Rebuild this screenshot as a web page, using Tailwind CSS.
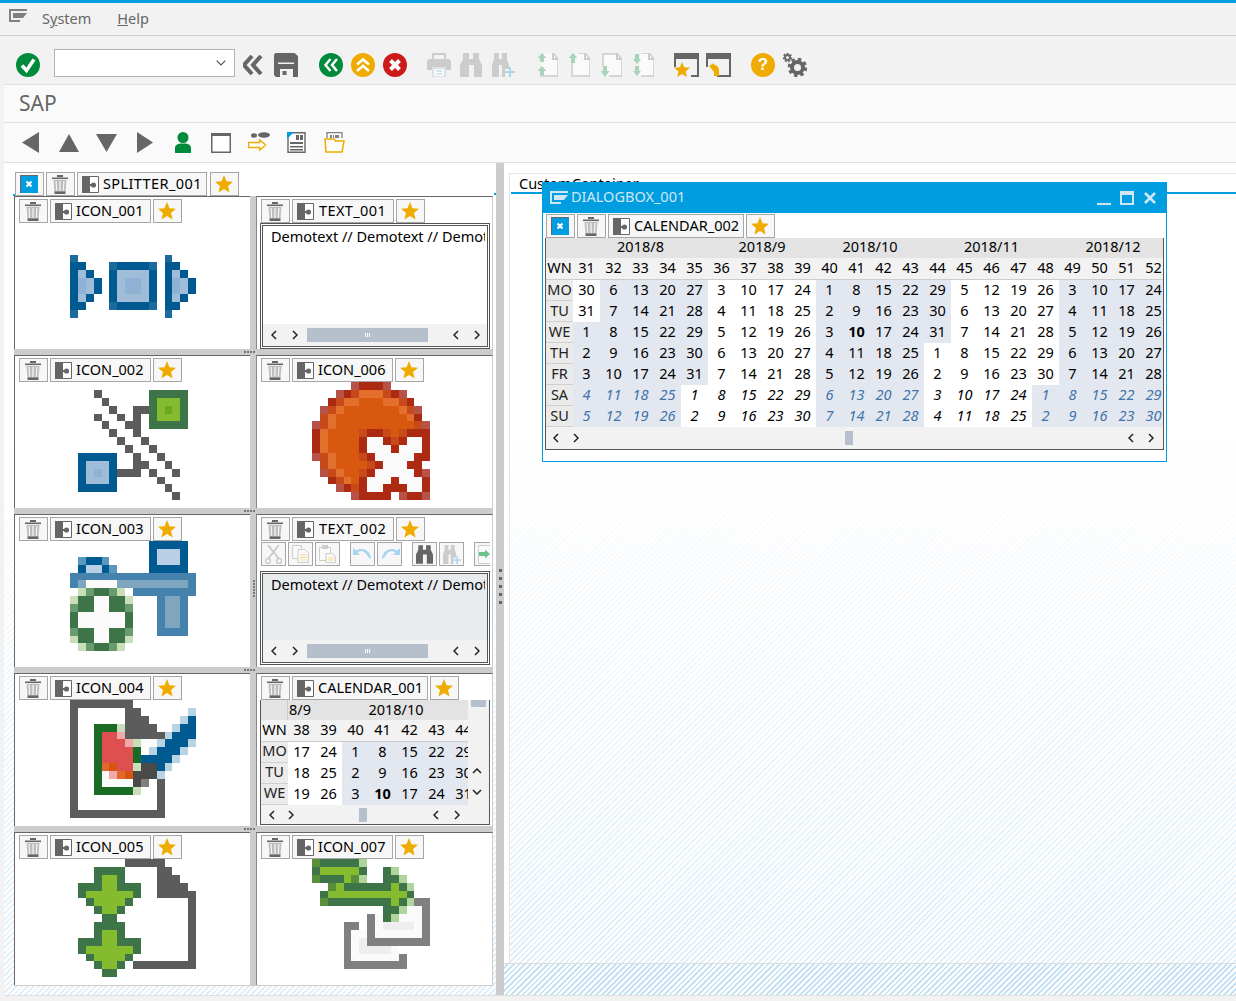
<!DOCTYPE html>
<html lang="en">

<head>
    <meta charset="UTF-8">
    <title>SAP</title>
    <script src="https://cdn.jsdelivr.net/npm/@tailwindcss/browser@4"></script>
</head>

<body class="relative w-[1236px] h-[1001px] overflow-hidden bg-[#f2f2f2] font-['Noto_Sans',sans-serif] text-[14.5px] leading-[22px] text-black">

    <!-- shared icons -->
    <svg class="hidden">
        <symbol id="trash" viewBox="0 0 16 19">
            <path d="M5 0h6v2H5z" fill="#666" />
            <path d="M0 2.5h16v1.6H0z" fill="#666" />
            <path d="M1.5 5h13l-1.2 14H2.700z" fill="#bdbdbd" />
            <path d="M3.500 6h1.200l.5 10H4.200zM7.400 6h1.200v10H7.400zM11.300 6h1.200l-.7 10h-1z" fill="#f7f7f7" />
            <path d="M2.500 16.500h11l-.2 2.500H2.700z" fill="#666" />
        </symbol>
        <symbol id="door" viewBox="0 0 17 17">
            <path d="M0 0h8v17H0z" fill="#666" />
            <path d="M8 .5h8.500v16H8" fill="#fff" stroke="#666" />
            <circle cx="11.500" cy="9" r="2.600" fill="#666" />
            <path d="M8 8h2v2H8z" fill="#666" />
        </symbol>
        <symbol id="star" viewBox="0 0 18 18">
            <path d="M9 0l2.500 6.300 6.500.5-5 4.300 1.600 6.500L9 14.100l-5.600 3.500L5 11.100 0 6.800l6.500-.5z" fill="#f0ab00" />
        </symbol>
        <symbol id="bluex" viewBox="0 0 18 18">
            <path d="M0 0h18v18H0z" fill="#666" />
            <path d="M1 1h17v17H1z" fill="#009de0" />
            <path d="M6.500 6.500l5 5M11.500 6.500l-5 5" stroke="#fff" stroke-width="2.200" />
        </symbol>
        <symbol id="chl" viewBox="0 0 6 10">
            <path d="M5 1L1 5l4 4" fill="none" stroke="#222" stroke-width="1.500" />
        </symbol>
        <symbol id="chr" viewBox="0 0 6 10">
            <path d="M1 1l4 4-4 4" fill="none" stroke="#222" stroke-width="1.500" />
        </symbol>
        <symbol id="binoc" viewBox="0 0 22 24">
            <path d="M3 0h6v6h4V0h6v6l3 6v12h-8V12H9v12H0V12l3-6z" />
        </symbol>
        <symbol id="flag" viewBox="0 0 18 13">
            <path d="M0 0h18v2H2v9h9v2H0zM4 4h14l-4 5H4z" fill="currentColor" />
        </symbol>
    </svg>

    <div class="h-[3px] bg-[#009de0]"></div>

    <!-- menu bar -->
    <div class="flex items-center h-[33px] border-b border-[#cccccc] text-[#666666]">
        <svg class="ml-[9px] w-[18px] h-[13px] -mt-[8px] text-[#808080]"><use href="#flag" /></svg>
        <span class="ml-[15px] -mt-[3px]">S<span class="underline">y</span>stem</span>
        <span class="ml-[26px] -mt-[3px]"><span class="underline">H</span>elp</span>
    </div>

    <div class="ml-[4px]">
        <!-- system toolbar -->
        <div class="flex items-center h-[49px] pt-[10px] border-b border-[#e0e0e0]">
            <svg class="ml-[12px] w-[24px] h-[24px]" viewBox="0 0 24 24"><circle cx="12" cy="12" r="12" fill="#008a3c" /><path d="M6 12.500l4.500 5L18 6.500" fill="none" stroke="#fff" stroke-width="3.500" /></svg>
            <div class="ml-[14px] -mt-[4px] w-[181px] h-[28px] flex items-center justify-end pr-[8px] bg-white border border-[#b3b3b3]">
                <svg class="w-[10px] h-[6px]" viewBox="0 0 10 6"><path d="M.7.7L5 5 9.300.7" fill="none" stroke="#555" stroke-width="1.200" /></svg>
            </div>
            <svg class="ml-[8px] w-[20px] h-[20px]" viewBox="0 0 20 20"><path d="M9 1L1 10l8 9M18 1l-8 9 8 9" fill="none" stroke="#666" stroke-width="4" /></svg>
            <svg class="ml-[11px] w-[24px] h-[24px]" viewBox="0 0 24 24"><path d="M0 1.500L1.500 0h19L24 3v21H2l-2-2z" fill="#666" /><path d="M4 9.500h16v1.500H4z" fill="#f2f2f2" /><path d="M6 16h13v8H6z" fill="#f2f2f2" /><path d="M8.500 18h4v4h-4z" fill="#666" /></svg>
            <svg class="ml-[21px] w-[24px] h-[24px]" viewBox="0 0 24 24"><circle cx="12" cy="12" r="12" fill="#008a3c" /><path d="M11.500 6l-5 6 5 6M18 6l-5 6 5 6" fill="none" stroke="#fff" stroke-width="2.500" /></svg>
            <svg class="ml-[8px] w-[24px] h-[24px]" viewBox="0 0 24 24"><circle cx="12" cy="12" r="12" fill="#f0ab00" /><path d="M6 11.500l6-5 6 5M6 18l6-5 6 5" fill="none" stroke="#fff" stroke-width="2.500" /></svg>
            <svg class="ml-[8px] w-[24px] h-[24px]" viewBox="0 0 24 24"><circle cx="12" cy="12" r="12" fill="#cc1919" /><path d="M7.500 7.500l9 9M16.500 7.500l-9 9" stroke="#fff" stroke-width="4" /></svg>
            <svg class="ml-[20px] w-[24px] h-[24px]" viewBox="0 0 24 24"><path d="M5 0h14v6H5z" fill="#cccccc" /><path d="M7 2h10v4H7z" fill="#f2f2f2" /><path d="M2 6h20l2 2v9h-5v-3H5v3H0V8z" fill="#cccccc" /><path d="M6 15h12v9H6z" fill="#fafafa" stroke="#cccccc" /><path d="M9 18h6M9 21h6" stroke="#a8d8f0" /><path d="M18 8.500h5" stroke="#a8d8f0" /></svg>
            <svg class="ml-[9px] w-[22px] h-[24px] fill-[#cccccc]"><use href="#binoc" /></svg>
            <svg class="ml-[10px] w-[23px] h-[24px]" viewBox="0 0 23 24"><path d="M2 0h5v6h3V0h5v6l2 6v4h-4v8H10V12H7v12H0V12l2-6z" fill="#cccccc" /><path d="M18 14v10M13 19h10" stroke="#a8d8f0" stroke-width="2" /></svg>
            <svg class="ml-[22px] w-[21px] h-[24px]" viewBox="0 0 21 24"><path d="M7 .5h9l4.500 5V23H3" fill="#fafafa" /><path d="M3 23h18V6l-5-6" fill="none" stroke="#cccccc" stroke-width="1.500" /><path d="M15 0h2v5h4v2h-6z" fill="#cccccc" /><path d="M5 0l4.500 5H7v4H3V5H.5zM5 13l4.500 5H7v4H3v-4H.5z" fill="#a8d5ba" /></svg>
            <svg class="ml-[11px] w-[21px] h-[24px]" viewBox="0 0 21 24"><path d="M7 .5h9l4.500 5V23H3V8" fill="#fafafa" /><path d="M3 10v13h18V6l-5-6H9" fill="none" stroke="#cccccc" stroke-width="1.500" /><path d="M15 0h2v5h4v2h-6z" fill="#cccccc" /><path d="M4 0l4.500 5H6v5H2V5H-.5z" fill="#a8d5ba" /></svg>
            <svg class="ml-[11px] w-[21px] h-[24px]" viewBox="0 0 21 24"><path d="M2 .5h14l4.500 5V23H2" fill="#fafafa" /><path d="M2 13V1h14l5 5v17H8" fill="none" stroke="#cccccc" stroke-width="1.500" /><path d="M15 0h2v5h4v2h-6z" fill="#cccccc" /><path d="M4 24l-4.500-6H2v-5h4v5h2.500z" fill="#a8d5ba" /></svg>
            <svg class="ml-[11px] w-[21px] h-[24px]" viewBox="0 0 21 24"><path d="M7 .5h9l4.500 5V23H7" fill="#fafafa" /><path d="M8 23h13V6l-5-6H8" fill="none" stroke="#cccccc" stroke-width="1.500" /><path d="M15 0h2v5h4v2h-6z" fill="#cccccc" /><path d="M4 11L.000 6h2V1h4v5h2zM4 23l-4-5h2v-5h4v5h2z" fill="#a8d5ba" /></svg>
            <svg class="ml-[20px] w-[25px] h-[24px]" viewBox="0 0 25 24"><path d="M0 0h25v24h-8v-2h6V6H2v8H0z" fill="#666" /><path d="M8 9l2.200 5.300 5.800.4-4.400 3.700 1.400 5.600L8 21l-4.900 3 1.400-5.600L0 14.700l5.800-.4z" fill="#f0ab00" /></svg>
            <svg class="ml-[7px] w-[25px] h-[24px]" viewBox="0 0 25 24"><path d="M0 0h25v24H11v-2h12V6H2v8H0z" fill="#666" /><path d="M3 13l5-3v2c3 0 5 2 5 6v5H8v-5c0-1-.5-1.500-1-1.500H8V19z" fill="#f0ab00" /></svg>
            <div class="ml-[20px] w-[24px] h-[24px] rounded-full bg-[#f0ab00] flex items-center justify-center text-white font-bold text-[17px] font-['Liberation_Sans',sans-serif]">?</div>
            <svg class="ml-[8px] w-[24px] h-[24px]" viewBox="0 0 24 24"><circle cx="14.500" cy="14.500" r="5.500" fill="none" stroke="#666" stroke-width="4" /><circle cx="14.500" cy="14.500" r="8" fill="none" stroke="#666" stroke-width="3.500" stroke-dasharray="3.300 3" /><circle cx="4.500" cy="4.500" r="2.500" fill="none" stroke="#666" stroke-width="2" /><circle cx="4.500" cy="4.500" r="4" fill="none" stroke="#666" stroke-width="1.500" stroke-dasharray="2 1.500" /></svg>
        </div>

        <!-- title -->
        <div class="h-[38px] flex items-center pl-[15px] pb-[2px] bg-[#fafafa] border-b border-[#e0e0e0] text-[21px] text-[#666666]">SAP</div>

        <!-- application toolbar -->
        <div class="flex items-center h-[40px] bg-[#fafafa] border-b border-[#e0e0e0]">
            <svg class="ml-[18px] w-[17px] h-[21px]" viewBox="0 0 17 21"><path d="M17 0v21L0 10.500z" fill="#666" /></svg>
            <svg class="ml-[20px] w-[20px] h-[18px]" viewBox="0 0 20 18"><path d="M0 18L10 0l10 18z" fill="#666" /></svg>
            <svg class="ml-[17px] w-[21px] h-[18px]" viewBox="0 0 21 18"><path d="M0 0h21L10.500 18z" fill="#666" /></svg>
            <svg class="ml-[20px] w-[16px] h-[21px]" viewBox="0 0 16 21"><path d="M0 0v21l16-10.500z" fill="#666" /></svg>
            <svg class="ml-[22px] w-[16px] h-[21px]" viewBox="0 0 16 21"><circle cx="8" cy="5.500" r="5.500" fill="#008a3c" /><path d="M0 21v-5c0-3 3-4 5-4.500h6c2 .5 5 1.500 5 4.500v5z" fill="#008a3c" /></svg>
            <svg class="ml-[20px] w-[20px] h-[20px]" viewBox="0 0 20 20"><path d="M0 0h20v20H0z" fill="#666" /><path d="M1.500 3h17v15.500h-17z" fill="#fff" /></svg>
            <svg class="ml-[17px] w-[22px] h-[21px]" viewBox="0 0 22 21"><ellipse cx="6" cy="3.500" rx="3" ry="2.200" fill="#666" /><ellipse cx="16" cy="3" rx="6" ry="2.800" fill="#666" /><path d="M.7 10.500h11V8l6 5-6 5v-2.500H.7z" fill="#fff" stroke="#f0ab00" stroke-width="1.300" /></svg>
            <svg class="ml-[17px] w-[19px] h-[21px]" viewBox="0 0 19 21"><path d="M1 .7h17v19.600H1z" fill="#fff" stroke="#666" stroke-width="1.400" /><path d="M0 0h7L0 7z" fill="#009de0" /><path d="M9 3h3v5H9zM13 3h3v5h-3z" fill="#666" /><path d="M3 10h13v2H3zM3 14h13v1.500H3zM3 17h13v1.500H3z" fill="#666" /></svg>
            <svg class="ml-[18px] w-[21px] h-[21px]" viewBox="0 0 21 21"><path d="M3 6V.7h15V6" fill="none" stroke="#808080" stroke-width="1.300" /><path d="M6 3h2v3H6zM9 3h1v3H9zM11 3h4v3h-4z" fill="#808080" /><path d="M1 7h9l1.500 2H20l-2 11H2z" fill="#fff" stroke="#f0ab00" stroke-width="1.500" /></svg>
        </div>

        <!-- main -->
        <div class="flex h-[832px]">
            <!-- left pane with splitter -->
            <div class="relative w-[492px] pt-[9px] bg-white bg-[linear-gradient(to_bottom,#ffffff_30%,#ffffff00_100%),repeating-linear-gradient(135deg,#ffffff_0px,#ffffff_2px,#e3f0f9_2px,#e3f0f9_4px)]">
                <div class="absolute left-[9px] top-[31px] w-[2px] h-[2px] bg-[#009de0]"></div>
                <div class="absolute left-[490px] top-[30px] w-[2px] h-[2px] bg-[#009de0]"></div>
                <div class="flex gap-[2px] h-[24px] ml-[11px]">
                    <button class="w-[29px] flex items-center justify-center pr-[2px] border border-[#a6a6a6] bg-[#f7f7f7]"><svg class="w-[18px] h-[18px]"><use href="#bluex" /></svg></button>
                    <button class="w-[29px] flex items-center justify-center pr-[2px] border border-[#a6a6a6] bg-[#f7f7f7]"><svg class="w-[16px] h-[19px]"><use href="#trash" /></svg></button>
                    <button class="w-[130px] flex items-center pl-[4px] pb-[2px] border border-[#a6a6a6] bg-[#f7f7f7] tracking-[0.4px]"><svg class="w-[17px] h-[17px] mr-[4px] mt-[2px]"><use href="#door" /></svg>SPLITTER_001</button>
                    <button class="ml-[1px] w-[29px] flex items-center justify-center pr-[2px] border border-[#a6a6a6] bg-[#f7f7f7]"><svg class="w-[18px] h-[18px]"><use href="#star" /></svg></button>
                </div>

                <div class="flex ml-[10px] w-[479px] pb-px bg-[#cccccc]">
                    <!-- left column -->
                    <div class="w-[236px] flex flex-col gap-[6px]">
                        <div class="h-[153px] bg-white border-t border-l border-[#666666] pt-[2px] pl-[4px] overflow-hidden">
                            <div class="flex gap-[2px] h-[24px]">
                                <button class="w-[29px] flex items-center justify-center pr-[2px] border border-[#a6a6a6] bg-[#f7f7f7]"><svg class="w-[16px] h-[19px]"><use href="#trash" /></svg></button>
                                <button class="w-[101px] flex items-center pl-[4px] pb-[2px] border border-[#a6a6a6] bg-[#f7f7f7]"><svg class="w-[17px] h-[17px] mr-[4px] mt-[2px]"><use href="#door" /></svg>ICON_001</button>
                                <button class="w-[29px] flex items-center justify-center pr-[2px] border border-[#a6a6a6] bg-[#f7f7f7]"><svg class="w-[18px] h-[18px]"><use href="#star" /></svg></button>
                            </div>
                            <div data-px="i1" class="ml-[51px]"></div>
                        </div>
                        <div class="h-[153px] bg-white border-t border-l border-[#666666] pt-[2px] pl-[4px] overflow-hidden">
                            <div class="flex gap-[2px] h-[24px]">
                                <button class="w-[29px] flex items-center justify-center pr-[2px] border border-[#a6a6a6] bg-[#f7f7f7]"><svg class="w-[16px] h-[19px]"><use href="#trash" /></svg></button>
                                <button class="w-[101px] flex items-center pl-[4px] pb-[2px] border border-[#a6a6a6] bg-[#f7f7f7]"><svg class="w-[17px] h-[17px] mr-[4px] mt-[2px]"><use href="#door" /></svg>ICON_002</button>
                                <button class="w-[29px] flex items-center justify-center pr-[2px] border border-[#a6a6a6] bg-[#f7f7f7]"><svg class="w-[18px] h-[18px]"><use href="#star" /></svg></button>
                            </div>
                            <div data-px="i2" class="ml-[51px]"></div>
                        </div>
                        <div class="h-[153px] bg-white border-t border-l border-[#666666] pt-[2px] pl-[4px] overflow-hidden">
                            <div class="flex gap-[2px] h-[24px]">
                                <button class="w-[29px] flex items-center justify-center pr-[2px] border border-[#a6a6a6] bg-[#f7f7f7]"><svg class="w-[16px] h-[19px]"><use href="#trash" /></svg></button>
                                <button class="w-[101px] flex items-center pl-[4px] pb-[2px] border border-[#a6a6a6] bg-[#f7f7f7]"><svg class="w-[17px] h-[17px] mr-[4px] mt-[2px]"><use href="#door" /></svg>ICON_003</button>
                                <button class="w-[29px] flex items-center justify-center pr-[2px] border border-[#a6a6a6] bg-[#f7f7f7]"><svg class="w-[18px] h-[18px]"><use href="#star" /></svg></button>
                            </div>
                            <div data-px="i3" class="ml-[51px]"></div>
                        </div>
                        <div class="h-[153px] bg-white border-t border-l border-[#666666] pt-[2px] pl-[4px] overflow-hidden">
                            <div class="flex gap-[2px] h-[24px]">
                                <button class="w-[29px] flex items-center justify-center pr-[2px] border border-[#a6a6a6] bg-[#f7f7f7]"><svg class="w-[16px] h-[19px]"><use href="#trash" /></svg></button>
                                <button class="w-[101px] flex items-center pl-[4px] pb-[2px] border border-[#a6a6a6] bg-[#f7f7f7]"><svg class="w-[17px] h-[17px] mr-[4px] mt-[2px]"><use href="#door" /></svg>ICON_004</button>
                                <button class="w-[29px] flex items-center justify-center pr-[2px] border border-[#a6a6a6] bg-[#f7f7f7]"><svg class="w-[18px] h-[18px]"><use href="#star" /></svg></button>
                            </div>
                            <div data-px="i4" class="ml-[51px]"></div>
                        </div>
                        <div class="h-[153px] bg-white border-t border-l border-[#666666] pt-[2px] pl-[4px] overflow-hidden">
                            <div class="flex gap-[2px] h-[24px]">
                                <button class="w-[29px] flex items-center justify-center pr-[2px] border border-[#a6a6a6] bg-[#f7f7f7]"><svg class="w-[16px] h-[19px]"><use href="#trash" /></svg></button>
                                <button class="w-[101px] flex items-center pl-[4px] pb-[2px] border border-[#a6a6a6] bg-[#f7f7f7]"><svg class="w-[17px] h-[17px] mr-[4px] mt-[2px]"><use href="#door" /></svg>ICON_005</button>
                                <button class="w-[29px] flex items-center justify-center pr-[2px] border border-[#a6a6a6] bg-[#f7f7f7]"><svg class="w-[18px] h-[18px]"><use href="#star" /></svg></button>
                            </div>
                            <div data-px="i5" class="ml-[51px]"></div>
                        </div>
                    </div>

                    <div class="w-[6px]"></div>

                    <!-- right column -->
                    <div class="w-[237px] flex flex-col gap-[6px]">
                        <div class="h-[153px] bg-white border-t border-l border-r border-t-[#666666] border-l-[#888888] border-r-[#cccccc] pt-[2px] overflow-hidden">
                            <div class="flex gap-[2px] h-[24px] pl-[4px]">
                                <button class="w-[29px] flex items-center justify-center pr-[2px] border border-[#a6a6a6] bg-[#f7f7f7]"><svg class="w-[16px] h-[19px]"><use href="#trash" /></svg></button>
                                <button class="w-[102px] flex items-center pl-[4px] pb-[2px] border border-[#a6a6a6] bg-[#f7f7f7] tracking-[0.4px]"><svg class="w-[17px] h-[17px] mr-[5px] mt-[2px]"><use href="#door" /></svg>TEXT_001</button>
                                <button class="w-[29px] flex items-center justify-center pr-[2px] border border-[#a6a6a6] bg-[#f7f7f7]"><svg class="w-[18px] h-[18px]"><use href="#star" /></svg></button>
                            </div>
                            <div class="ml-[3px] w-[230px] h-[126px] border border-[#555555] p-px">
                                <div class="h-full border border-[#555555] flex flex-col">
                                    <div class="flex-1 ml-[8px] mr-[2px] -mt-px overflow-hidden whitespace-nowrap">Demotext // Demotext // Demotext</div>
                                    <div class="h-[22px] bg-[#f2f2f2] flex items-center">
                                        <span class="w-[21px] flex justify-center"><svg class="w-[6px] h-[10px]"><use href="#chl" /></svg></span>
                                        <span class="w-[21px] flex justify-center"><svg class="w-[6px] h-[10px]"><use href="#chr" /></svg></span>
                                        <span class="ml-[2px] w-[121px] h-[14px] bg-[#b5c0cc] flex items-center justify-center gap-px"><i class="w-px h-[4px] bg-white"></i><i class="w-px h-[4px] bg-white"></i><i class="w-px h-[4px] bg-white"></i></span>
                                        <span class="ml-[17px] w-[21px] flex justify-center"><svg class="w-[6px] h-[10px]"><use href="#chl" /></svg></span>
                                        <span class="w-[21px] flex justify-center"><svg class="w-[6px] h-[10px]"><use href="#chr" /></svg></span>
                                    </div>
                                </div>
                            </div>
                        </div>
                        <div class="h-[153px] bg-white border-t border-l border-r border-t-[#666666] border-l-[#888888] border-r-[#cccccc] pt-[2px] overflow-hidden">
                            <div class="flex gap-[2px] h-[24px] pl-[4px]">
                                <button class="w-[29px] flex items-center justify-center pr-[2px] border border-[#a6a6a6] bg-[#f7f7f7]"><svg class="w-[16px] h-[19px]"><use href="#trash" /></svg></button>
                                <button class="w-[101px] flex items-center pl-[4px] pb-[2px] border border-[#a6a6a6] bg-[#f7f7f7]"><svg class="w-[17px] h-[17px] mr-[4px] mt-[2px]"><use href="#door" /></svg>ICON_006</button>
                                <button class="w-[29px] flex items-center justify-center pr-[2px] border border-[#a6a6a6] bg-[#f7f7f7]"><svg class="w-[18px] h-[18px]"><use href="#star" /></svg></button>
                            </div>
                            <div data-px="i6" class="ml-[55px]"></div>
                        </div>
                        <div class="h-[153px] bg-white border-t border-l border-r border-t-[#666666] border-l-[#888888] border-r-[#cccccc] pt-[2px] overflow-hidden">
                            <div class="flex gap-[2px] h-[24px] pl-[4px]">
                                <button class="w-[29px] flex items-center justify-center pr-[2px] border border-[#a6a6a6] bg-[#f7f7f7]"><svg class="w-[16px] h-[19px]"><use href="#trash" /></svg></button>
                                <button class="w-[102px] flex items-center pl-[4px] pb-[2px] border border-[#a6a6a6] bg-[#f7f7f7] tracking-[0.4px]"><svg class="w-[17px] h-[17px] mr-[5px] mt-[2px]"><use href="#door" /></svg>TEXT_002</button>
                                <button class="w-[29px] flex items-center justify-center pr-[2px] border border-[#a6a6a6] bg-[#f7f7f7]"><svg class="w-[18px] h-[18px]"><use href="#star" /></svg></button>
                            </div>
                            <!-- editor toolbar -->
                            <div class="flex h-[24px] mt-px pl-[4px] w-[233px] overflow-hidden">
                                <span class="shrink-0 w-[25px] flex items-center justify-center border border-[#a6a6a6] bg-[#f7f7f7]"><svg class="w-[17px] h-[19px]" viewBox="0 0 17 19"><path d="M3 0l11 14M14 0L3 14" stroke="#cccccc" stroke-width="2" /><circle cx="3" cy="16" r="2.500" fill="none" stroke="#cccccc" stroke-width="1.500" /><circle cx="14" cy="16" r="2.500" fill="none" stroke="#cccccc" stroke-width="1.500" /></svg></span>
                                <span class="shrink-0 ml-[2px] w-[25px] flex items-center justify-center border border-[#a6a6a6] bg-[#f7f7f7]"><svg class="w-[17px] h-[18px]" viewBox="0 0 17 18"><path d="M.5.5h9v13h-9z" fill="#fafafa" stroke="#cccccc" /><path d="M6 4.500h7l3.500 3.500v9.500H6z" fill="#fafafa" stroke="#cccccc" /><path d="M8 10h7M8 12.500h7M8 15h7" stroke="#f5d98a" /></svg></span>
                                <span class="shrink-0 ml-[2px] w-[25px] flex items-center justify-center border border-[#a6a6a6] bg-[#f7f7f7]"><svg class="w-[17px] h-[18px]" viewBox="0 0 17 18"><path d="M.5 2.500h11v13H.5z" fill="#fafafa" stroke="#cccccc" /><path d="M3 0h6v4H3z" fill="#cccccc" /><path d="M7 8.500h6l3.500 3v6H7z" fill="#fafafa" stroke="#cccccc" /><path d="M9 13h6M9 15h6" stroke="#f5d98a" /></svg></span>
                                <span class="shrink-0 ml-[10px] w-[25px] flex items-center justify-center border border-[#a6a6a6] bg-[#f7f7f7]"><svg class="w-[20px] h-[14px]" viewBox="0 0 20 14"><path d="M0 1v7h7L4.500 5.500C8 3 13 4 15 10l3 2C18 5 11-1 3 3.500z" fill="#a8d4ef" /></svg></span>
                                <span class="shrink-0 ml-[2px] w-[25px] flex items-center justify-center border border-[#a6a6a6] bg-[#f7f7f7]"><svg class="w-[20px] h-[14px]" viewBox="0 0 20 14"><path d="M20 1v7h-7l2.500-2.500C12 3 7 4 5 10l-3 2C2 5 9-1 17 3.500z" fill="#a8d4ef" /></svg></span>
                                <span class="shrink-0 ml-[10px] w-[25px] flex items-center justify-center border border-[#a6a6a6] bg-[#f7f7f7]"><svg class="w-[17px] h-[19px] fill-[#666666]"><use href="#binoc" /></svg></span>
                                <span class="shrink-0 ml-[2px] w-[25px] flex items-center justify-center border border-[#a6a6a6] bg-[#f7f7f7]"><svg class="w-[18px] h-[19px]" viewBox="0 0 23 24"><path d="M2 0h5v6h3V0h5v6l2 6v4h-4v8H10V12H7v12H0V12l2-6z" fill="#cccccc" /><path d="M18 14v10M13 19h10" stroke="#a8d8f0" stroke-width="2" /></svg></span>
                                <span class="shrink-0 ml-[10px] w-[25px] flex items-center justify-center border border-[#a6a6a6] bg-[#f7f7f7]"><svg class="w-[17px] h-[19px]" viewBox="0 0 17 19"><path d="M.5.500h11l5 5v13H.5z" fill="#fafafa" stroke="#cccccc" /><path d="M1 7h6V4.500L12 9l-5 4.500V11H1z" fill="#6cc18d" /></svg></span>
                            </div>
                            <div class="ml-[3px] mt-[5px] w-[230px] h-[94px] border border-[#555555] p-px">
                                <div class="h-full border border-[#555555] flex flex-col bg-[#e8ebee]">
                                    <div class="flex-1 ml-[8px] mr-[2px] -mt-px overflow-hidden whitespace-nowrap">Demotext // Demotext // Demotext</div>
                                    <div class="h-[22px] bg-[#f2f2f2] flex items-center">
                                        <span class="w-[21px] flex justify-center"><svg class="w-[6px] h-[10px]"><use href="#chl" /></svg></span>
                                        <span class="w-[21px] flex justify-center"><svg class="w-[6px] h-[10px]"><use href="#chr" /></svg></span>
                                        <span class="ml-[2px] w-[121px] h-[14px] bg-[#b5c0cc] flex items-center justify-center gap-px"><i class="w-px h-[4px] bg-white"></i><i class="w-px h-[4px] bg-white"></i><i class="w-px h-[4px] bg-white"></i></span>
                                        <span class="ml-[17px] w-[21px] flex justify-center"><svg class="w-[6px] h-[10px]"><use href="#chl" /></svg></span>
                                        <span class="w-[21px] flex justify-center"><svg class="w-[6px] h-[10px]"><use href="#chr" /></svg></span>
                                    </div>
                                </div>
                            </div>
                        </div>
                        <div class="h-[153px] bg-white border-t border-l border-r border-t-[#666666] border-l-[#888888] border-r-[#cccccc] pt-[2px] overflow-hidden">
                            <div class="flex gap-[2px] h-[24px] pl-[4px]">
                                <button class="w-[29px] flex items-center justify-center pr-[2px] border border-[#a6a6a6] bg-[#f7f7f7]"><svg class="w-[16px] h-[19px]"><use href="#trash" /></svg></button>
                                <button class="w-[136px] flex items-center pl-[4px] pb-[2px] border border-[#a6a6a6] bg-[#f7f7f7]"><svg class="w-[17px] h-[17px] mr-[4px] mt-[2px]"><use href="#door" /></svg>CALENDAR_001</button>
                                <button class="w-[29px] flex items-center justify-center pr-[2px] border border-[#a6a6a6] bg-[#f7f7f7]"><svg class="w-[18px] h-[18px]"><use href="#star" /></svg></button>
                            </div>
                            <!-- small calendar -->
                            <div class="ml-[3px] w-[230px] h-[125px] border-l border-r border-b border-[#555555] bg-[#f2f2f2]">
                                <div class="flex h-[105px]">
                                    <div class="w-[207px] overflow-hidden relative">
                                        <div class="flex h-[20px] leading-[18px] bg-[#e3e3e3] whitespace-nowrap">
                                            <div class="w-[27px] border-r border-[#cccccc]"></div>
                                            <div class="w-[54px] pl-[1px]">8/9</div>
                                            <div class="w-[108px] text-center">2018/10</div>
                                        </div>
                                        <div id="cal-small" class="grid grid-cols-[repeat(8,27px)] grid-rows-[22px_21px_21px_21px] w-[216px]"></div>
                                    </div>
                                    <div class="relative flex-1">
                                        <div class="ml-[3px] w-[15px] h-[7px] bg-[#b5c0cc]"></div>
                                        <svg class="absolute left-[4px] top-[68px] w-[10px] h-[6px]" viewBox="0 0 10 6"><path d="M1 5l4-4 4 4" fill="none" stroke="#222" stroke-width="1.500" /></svg>
                                        <svg class="absolute left-[4px] top-[89px] w-[10px] h-[6px]" viewBox="0 0 10 6"><path d="M1 1l4 4 4-4" fill="none" stroke="#222" stroke-width="1.500" /></svg>
                                    </div>
                                </div>
                                <div class="h-[19px] flex items-center">
                                    <span class="ml-[8px] w-[6px] flex"><svg class="w-[6px] h-[10px]"><use href="#chl" /></svg></span>
                                    <span class="ml-[13px] w-[6px] flex"><svg class="w-[6px] h-[10px]"><use href="#chr" /></svg></span>
                                    <span class="ml-[65px] w-[8px] h-[14px] bg-[#b5c0cc]"></span>
                                    <span class="ml-[66px] w-[6px] flex"><svg class="w-[6px] h-[10px]"><use href="#chl" /></svg></span>
                                    <span class="ml-[15px] w-[6px] flex"><svg class="w-[6px] h-[10px]"><use href="#chr" /></svg></span>
                                </div>
                            </div>
                        </div>
                        <div class="h-[153px] bg-white border-t border-l border-r border-t-[#666666] border-l-[#888888] border-r-[#cccccc] pt-[2px] overflow-hidden">
                            <div class="flex gap-[2px] h-[24px] pl-[4px]">
                                <button class="w-[29px] flex items-center justify-center pr-[2px] border border-[#a6a6a6] bg-[#f7f7f7]"><svg class="w-[16px] h-[19px]"><use href="#trash" /></svg></button>
                                <button class="w-[101px] flex items-center pl-[4px] pb-[2px] border border-[#a6a6a6] bg-[#f7f7f7]"><svg class="w-[17px] h-[17px] mr-[4px] mt-[2px]"><use href="#door" /></svg>ICON_007</button>
                                <button class="w-[29px] flex items-center justify-center pr-[2px] border border-[#a6a6a6] bg-[#f7f7f7]"><svg class="w-[18px] h-[18px]"><use href="#star" /></svg></button>
                            </div>
                            <div data-px="i7" class="ml-[55px]"></div>
                        </div>
                    </div>
                </div>
                <div class="absolute left-[240px] top-[188px] flex gap-px"><i class="w-[2px] h-[2px] bg-[#777777]"></i><i class="w-[2px] h-[2px] bg-[#777777]"></i><i class="w-[2px] h-[2px] bg-[#777777]"></i><i class="w-[2px] h-[2px] bg-[#777777]"></i></div>
                <div class="absolute left-[240px] top-[347px] flex gap-px"><i class="w-[2px] h-[2px] bg-[#777777]"></i><i class="w-[2px] h-[2px] bg-[#777777]"></i><i class="w-[2px] h-[2px] bg-[#777777]"></i><i class="w-[2px] h-[2px] bg-[#777777]"></i></div>
                <div class="absolute left-[240px] top-[506px] flex gap-px"><i class="w-[2px] h-[2px] bg-[#777777]"></i><i class="w-[2px] h-[2px] bg-[#777777]"></i><i class="w-[2px] h-[2px] bg-[#777777]"></i><i class="w-[2px] h-[2px] bg-[#777777]"></i></div>
                <div class="absolute left-[240px] top-[665px] flex gap-px"><i class="w-[2px] h-[2px] bg-[#777777]"></i><i class="w-[2px] h-[2px] bg-[#777777]"></i><i class="w-[2px] h-[2px] bg-[#777777]"></i><i class="w-[2px] h-[2px] bg-[#777777]"></i></div>
                <div class="absolute left-[249px] top-[417px] flex flex-col gap-px"><i class="w-[2px] h-[2px] bg-[#777777]"></i><i class="w-[2px] h-[2px] bg-[#777777]"></i><i class="w-[2px] h-[2px] bg-[#777777]"></i><i class="w-[2px] h-[2px] bg-[#777777]"></i><i class="w-[2px] h-[2px] bg-[#777777]"></i><i class="w-[2px] h-[2px] bg-[#777777]"></i></div>
            </div>

            <!-- main sash -->
            <div class="w-[8px] bg-[#cccccc] flex flex-col items-center justify-center gap-[3px] pt-[14px]">
                <i class="w-[5px] h-[5px] bg-[#666666] border border-[#cccccc]"></i><i class="w-[5px] h-[5px] bg-[#666666] border border-[#cccccc]"></i><i class="w-[5px] h-[5px] bg-[#666666] border border-[#cccccc]"></i><i class="w-[5px] h-[5px] bg-[#666666] border border-[#cccccc]"></i><i class="w-[5px] h-[5px] bg-[#666666] border border-[#cccccc]"></i>
            </div>

            <!-- right pane -->
            <div class="flex-1 flex flex-col pt-[10px] bg-white">
                <div class="flex-1 flex flex-col ml-[5px] border-t border-l border-[#e5e5e5]">
                    <div class="h-[20px] pl-[8px] leading-[18px] border-b-2 border-[#009de0] ml-[1px] -mr-px"><span>CustomContainer</span></div>
                    <div class="flex-1 bg-[linear-gradient(to_bottom,#ffffff_0%,#ffffff_30%,#ffffff00_100%),repeating-linear-gradient(135deg,#ffffff_0px,#ffffff_2px,#e3f0f9_2px,#e3f0f9_4px)]"></div>
                </div>
                <div class="h-[32px] border-t border-[#dddddd] bg-[repeating-linear-gradient(135deg,#ffffff_0px,#ffffff_2px,#c7e2f3_2px,#c7e2f3_4px)]"></div>
            </div>
        </div>
        <div class="h-px bg-[#e0e0e0]"></div>
    </div>

    <!-- dialog box -->
    <div class="absolute left-[542px] top-[182px] w-[625px] h-[280px] bg-white border border-[#009de0]">
        <div class="flex items-center h-[30px] bg-[#009de0] text-[#cfe6f4]">
            <svg class="ml-[7px] w-[18px] h-[13px] -translate-y-[1px]"><use href="#flag" /></svg>
            <span class="ml-[3px] -translate-y-[2px]">DIALOGBOX_001</span>
            <span class="ml-auto w-[14px] h-[2px] mt-[11px] bg-[#cfe6f4]"></span>
            <svg class="ml-[9px] w-[14px] h-[14px]" viewBox="0 0 14 14"><path d="M0 0h14v14H0zM2 4v8h10V4z" fill="#cfe6f4" fill-rule="evenodd" /></svg>
            <svg class="ml-[10px] mr-[10px] w-[12px] h-[12px]" viewBox="0 0 12 12"><path d="M1 1l10 10M11 1L1 11" stroke="#cfe6f4" stroke-width="2.600" /></svg>
        </div>
        <div class="flex gap-[2px] h-[24px] ml-[3px] mt-px">
            <button class="w-[29px] flex items-center justify-center pr-[2px] border border-[#a6a6a6] bg-[#f7f7f7]"><svg class="w-[18px] h-[18px]"><use href="#bluex" /></svg></button>
            <button class="w-[29px] flex items-center justify-center pr-[2px] border border-[#a6a6a6] bg-[#f7f7f7]"><svg class="w-[16px] h-[19px]"><use href="#trash" /></svg></button>
            <button class="w-[136px] flex items-center pl-[4px] pb-[2px] border border-[#a6a6a6] bg-[#f7f7f7]"><svg class="w-[17px] h-[17px] mr-[4px] mt-[2px]"><use href="#door" /></svg>CALENDAR_002</button>
            <button class="w-[29px] flex items-center justify-center pr-[2px] border border-[#a6a6a6] bg-[#f7f7f7]"><svg class="w-[18px] h-[18px]"><use href="#star" /></svg></button>
        </div>
        <div class="ml-[2px] w-[619px] h-[212px] border-l border-r border-b border-[#555555] bg-[#f2f2f2] overflow-hidden">
            <div class="w-[621px]">
                <div class="flex h-[20px] leading-[17px] bg-[#e3e3e3] pl-[27px] text-center">
                    <div class="w-[135px]">2018/8</div>
                    <div class="w-[108px]">2018/9</div>
                    <div class="w-[108px]">2018/10</div>
                    <div class="w-[135px]">2018/11</div>
                    <div class="w-[108px]">2018/12</div>
                </div>
                <div id="cal-big" class="grid grid-cols-[repeat(23,27px)] grid-rows-[22px_repeat(7,21px)]"></div>
            </div>
            <div class="h-[22px] flex items-center">
                <span class="ml-[7px] w-[6px] flex"><svg class="w-[6px] h-[10px]"><use href="#chl" /></svg></span>
                <span class="ml-[14px] w-[6px] flex"><svg class="w-[6px] h-[10px]"><use href="#chr" /></svg></span>
                <span class="ml-[266px] w-[8px] h-[14px] bg-[#b5c0cc]"></span>
                <span class="ml-[275px] w-[6px] flex"><svg class="w-[6px] h-[10px]"><use href="#chl" /></svg></span>
                <span class="ml-[14px] w-[6px] flex"><svg class="w-[6px] h-[10px]"><use href="#chr" /></svg></span>
            </div>
        </div>
    </div>

    <script>
        // 16x16 pixel icons, one letter per pixel
        const colors = {
            D: '#005a92', a: '#1b6c9c', L: '#9fbcd9', M: '#8fb2d4', l: '#b8cfe6', m: '#5b96bd',
            G: '#5c5c5c', E: '#3e7548', P: '#85bb2f', Q: '#6aaa1f', S: '#4682ae', b: '#7fa5bf',
            g: '#6a9a70', p: '#c9dfba', W: '#fafafa', V: '#1a6b25', r: '#de4f4f', k: '#f0a8a8',
            o: '#e0692e', O: '#d9540f', K: '#4a4a4a', c: '#808080', x: '#b8d3e3', B: '#005a92',
            t: '#ad2a12', u: '#b75248', d: '#d9580f', e: '#e26f2c', f: '#c74a1a',
            h: '#5a8f3a', q: '#b0d59a', n: '#808080', y: '#eeeeee'
        };
        const icons = {
            i1: ['', '', '', '', 'a...........a...', 'DD...aDDDDa.DD..', 'DLD..DLLLLD.DLD.', 'DMLD.DLMMLD.DMLD', 'DMLD.DLMMLD.DMLD', 'DLD..DLLLLD.DLD.', 'DD...aDDDDa.DD..', 'a...........a...'],
            i2: ['', '...G......EEEEE.', '....G.....EPPPE.', '.....G..GGEPQPE.', '...G..G.G.EPPPE.', '....G..GG.EEEEE.', '.....G..G.......', '......G..G......', '.......G..G.....', '.DDDDD..G..G....', '.DLLLD..GG..G...', '.DLMLDGGG.G..G..', '.DLLLD.....G....', '.DDDDD......G...', '.............G..'],
            i3: ['..........DDDDD.', '..........DlllD.', '.mDDm.....DlllD.', '.DllDm....DDDDD.', 'SSSSSSSSSSSSSSSS', 'SbWWWWbbbbbbbbbS', '.pgEEgp.SSSSSSSS', 'pEEWWEEp...SbbS.', 'gEEWWEEg...SbbS.', 'EWWWWWWE...SbbS.', 'EWWWWWWE...SbbS.', 'gEEWWEEg...SSSS.', 'pEEWWEEp........', '.pgEEgp.........'],
            i4: ['GGGGGGGG........', 'G......GG......x', 'G......GGG....xB', 'G..VVVpGGGG..xBB', 'G..VrrkGGGGGxBBB', 'G..VrrrkpWWxBBBx', 'G..VrrrrV.xBBBx.', 'G..VrrrrVBBBBx..', 'G..VoOrrpKKBx...', 'G..VWkoOKKKx....', 'G..VWWWWKc.G....', 'G..VVVVVp..G....', 'G..........G....', 'G..........G....', 'GGGGGGGGGGGG....'],
            i5: ['.......GGGGG....', '...EEEE....GG...', '...EPPE....GGG..', '.EEEPPEEE..GGGG.', '.EPPPPPPE..GGGGG', '..EPPPPE.......G', '...EPPE........G', '....EE.........G', '...EEEE........G', '...EPPE........G', '.EEEPPEEE......G', '.EPPPPPPE......G', '..EPPPPE.......G', '...EPPE.GGGGGGGG', '....EE..........'],
            i6: ['.....utttu......', '...utfeeeftu....', '..tfeedddeeft...', '.ufedddddddefu..', '.fedddddddddet..', 'ufeddddddddddfu.', 'teddddfttfdfttt.', 'teddddtWWtftWWt.', 'teddddtWWWtWWWt.', 'ufedddftWWWWWtt.', '.feddddftWWWtt..', '.ufeddftWWWWWtu.', '..tfedtWWWtWWWt.', '...utftWWtttWWt.', '.....utttt.uttu.'],
            i7: ['hEEEEEq.........', 'EPPPPPE..Eq.....', 'hEEEPhq..EEq....', '..hPEEEEEEPEq...', '.EPPPPPPPPPPE...', '.hEEEEEEEEPEqnn.', '.........EEqWWn.', '.......nWEqWWWn.', '....nn.nWyyyyWn.', '....nWWnWWWWWWn.', '....nWynnnnnnnn.', '....nWyyyyW.....', '....nWWWWWWn....', '....nnnnnnnn....']
        };
        document.querySelectorAll('[data-px]').forEach(el => {
            let rects = '';
            icons[el.dataset.px].forEach((row, y) => {
                [...row].forEach((ch, x) => {
                    if (colors[ch]) rects += `<rect x="${x}" y="${y}" width="1" height="1" fill="${colors[ch]}"/>`;
                });
            });
            el.innerHTML = `<svg width="126" height="126" viewBox="0 0 16 16" shape-rendering="crispEdges">${rects}</svg>`;
        });

        // calendar grids: weeks are counted from monday 30 july 2018 (week 31)
        const dayNames = ['MO', 'TU', 'WE', 'TH', 'FR', 'SA', 'SU'];
        function buildCalendar(id, firstWeek, lastWeek, rows, shift) {
            let html = `<div class="flex items-center justify-center border-b border-[#cccccc] ${shift}">WN</div>`;
            for (let w = firstWeek; w <= lastWeek; w++) {
                html += `<div class="flex items-center justify-center border-b border-[#cccccc] ${shift}">${w}</div>`;
            }
            for (let r = 0; r < rows; r++) {
                html += `<div class="flex items-center justify-center bg-[#ebebeb] border-b border-[#d0d0d0] text-[#222222] ${shift}">${dayNames[r]}</div>`;
                for (let w = firstWeek; w <= lastWeek; w++) {
                    const date = new Date(2018, 6, 30 + (w - 31) * 7 + r);
                    const blue = date.getMonth() % 2 === 1;
                    const weekend = r > 4;
                    const today = date.getMonth() === 9 && date.getDate() === 10;
                    const bg = blue ? 'bg-[#e3e8f0]' : 'bg-white';
                    const text = weekend ? (blue ? 'italic text-[#3f72a8]' : 'italic') : (today ? 'font-bold' : '');
                    html += `<div class="flex items-center justify-center ${bg} ${text} ${shift}">${date.getDate()}</div>`;
                }
            }
            document.getElementById(id).innerHTML = html;
        }
        buildCalendar('cal-big', 31, 52, 7, 'pb-[3px]');
        buildCalendar('cal-small', 38, 44, 3, 'pb-[4px]');
    </script>
</body>

</html>
